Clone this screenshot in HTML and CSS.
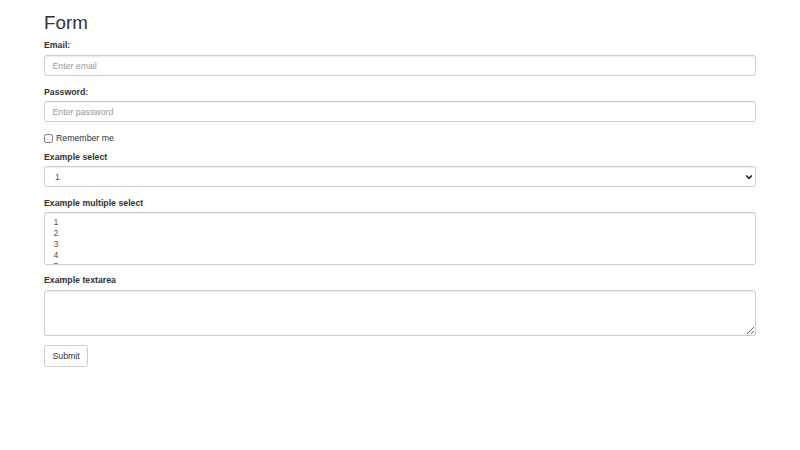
FILE: index.html
```html
<!DOCTYPE html>
<html>
<head>
<meta charset="utf-8">
<link rel="stylesheet" href="styles.css">
</head>
<body>
<div class="container">
  <h2 class="title">Form</h2>
  <form class="form">
    <div class="group">
      <label class="label" for="email">Email:</label>
      <input class="control" id="email" type="email" placeholder="Enter email">
    </div>
    <div class="group">
      <label class="label" for="pwd">Password:</label>
      <input class="control" id="pwd" type="password" placeholder="Enter password">
    </div>
    <div class="check">
      <label class="check-label"><input class="check-box" type="checkbox">Remember me</label>
    </div>
    <div class="group">
      <label class="label" for="sel">Example select</label>
      <div class="select-wrap">
        <select class="control select" id="sel">
          <option>1</option><option>2</option><option>3</option><option>4</option><option>5</option>
        </select>
        <svg class="chev" width="8" height="6" viewBox="0 0 8 6"><polyline points="1.2,1.5 4,4.3 6.8,1.5" fill="none" stroke="#222" stroke-width="1.6"/></svg>
      </div>
    </div>
    <div class="group">
      <label class="label" for="multi">Example multiple select</label>
      <select class="control multi" id="multi" multiple>
        <option>1</option><option>2</option><option>3</option><option>4</option><option>5</option>
      </select>
    </div>
    <div class="group">
      <label class="label" for="ta">Example textarea</label>
      <textarea class="control area" id="ta" rows="3"></textarea>
    </div>
    <button class="btn" type="submit">Submit</button>
  </form>
</div>
</body>
</html>
```
FILE: styles.css
```css
* { box-sizing: border-box; }
html, body { margin: 0; background: #fff; }
body {
  font-family: "Liberation Sans", Arial, sans-serif;
  font-size: 8.75px;
  line-height: 12.5px;
  color: #333;
}
.container {
  padding: 0 44px;
}
.title {
  margin: 12.5px 0 6.25px;
  font-size: 18.75px;
  font-weight: 500;
  line-height: 20.6px;
}
.form { margin: 0; }
.group { margin-bottom: 9.375px; }
.label {
  display: inline-block;
  margin-bottom: 3.125px;
  font-weight: 700;
}
.control {
  display: block;
  width: 100%;
  height: 21.25px;
  padding: 3.75px 7.5px;
  font-family: inherit;
  font-size: 8.75px;
  line-height: 12.5px;
  color: #555;
  background: #fff;
  border: 1px solid #ccc;
  border-radius: 2.5px;
  box-shadow: inset 0 1px 1px rgba(0,0,0,.075);
  outline: none;
  margin: 0;
}
.control::placeholder { color: #999; opacity: 1; }
.select-wrap { position: relative; }
.select {
  appearance: none;
  -webkit-appearance: none;
  padding: 3.75px 20px 3.75px 10px;
}
.chev {
  position: absolute;
  right: 3px;
  top: 8px;
  pointer-events: none;
}
.multi {
  height: 52.5px;
  padding: 3.25px 7.5px 0;
  overflow: hidden;
}
.multi option { padding: 0 1px; line-height: 11px; min-height: 11px; color: #555; }
.area { height: 46px; resize: vertical; }
.check { margin: 9.4px 0 6.25px; }
.check-label {
  display: flex;
  align-items: flex-start;
  min-height: 12.5px;
  font-weight: 400;
}
.check-box {
  width: 8.5px;
  height: 8.5px;
  margin: 2.5px 3.5px 0 0;
}
.btn {
  display: inline-block;
  padding: 3.75px 7.5px;
  font-family: inherit;
  font-size: 8.75px;
  line-height: 12.5px;
  color: #333;
  background: #fff;
  border: 1px solid #ccc;
  border-radius: 2.5px;
  margin: 0;
}
```
